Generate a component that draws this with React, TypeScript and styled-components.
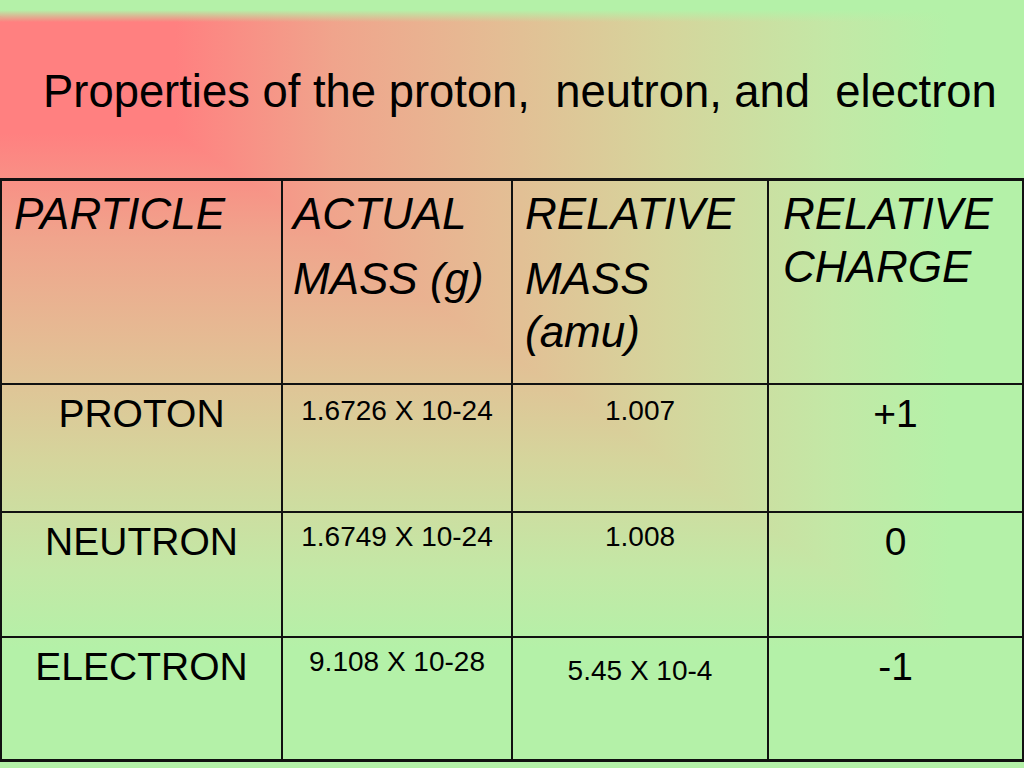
import React from 'react';
import styled, { createGlobalStyle } from 'styled-components';

const GREEN = '#b4f1a8';
const LINE = '#111';

const Global = createGlobalStyle`
  html, body { margin: 0; padding: 0; }
  body {
    width: 1024px;
    height: 768px;
    overflow: hidden;
    background: ${GREEN};
    font-family: "Liberation Sans", Arial, sans-serif;
    color: #000;
  }
`;

const H_STOPS = `#ff8080 175px, #f0a48c 333px, #e4bd94 500px, #d5d59c 667px, #c3e8a6 833px, ${GREEN} 950px`;
const V_STOPS = `#ff8080 123px, #f0a48c 228px, #e4bd94 339px, #d5d59c 450px, #c3e8a6 561px, ${GREEN} 639px`;
const TOP_FADE = `linear-gradient(to bottom, ${GREEN} 0px, rgba(180, 241, 168, 0) 12px)`;

const Page = styled.div`
  width: 1024px;
  height: 768px;
  padding-top: 10px;
  box-sizing: border-box;
  background: ${GREEN};
`;

const Slide = styled.div`
  position: relative;
  isolation: isolate;
  height: 758px;
  display: flex;
  flex-direction: column;
  background: ${TOP_FADE}, linear-gradient(to right, ${H_STOPS});

  &::before {
    content: '';
    position: absolute;
    inset: 0;
    z-index: -1;
    background: ${TOP_FADE}, linear-gradient(to bottom, ${V_STOPS});
    clip-path: polygon(0 6px, 1024px 689px, 1024px 100%, 0 100%);
  }
`;

const Title = styled.h1`
  margin: 0;
  height: 168px;
  box-sizing: border-box;
  padding: 59px 0 0 43px;
  font-size: 45.4px;
  line-height: 45px;
  font-weight: normal;
  white-space: pre;
`;

const Table = styled.div`
  display: grid;
  grid-template-columns: 281px 230px 256px 1fr;
  grid-template-rows: 204px 128px 125px 121px;
  border-top: 3px solid ${LINE};
  border-left: 2px solid ${LINE};
  border-right: 2px solid ${LINE};
  border-bottom: 3px solid ${LINE};
`;

const CellBase = styled.div`
  box-sizing: border-box;
  border-right: 2px solid ${LINE};
  border-bottom: 2px solid ${LINE};
  &:nth-child(4n) { border-right: none; }
  &:nth-last-child(-n + 4) { border-bottom: none; }
`;

const HeadCell = styled(CellBase)<{ $pad: number }>`
  padding: 6px 8px 0 ${p => p.$pad}px;
  font-size: 44px;
  line-height: 53px;
  font-style: italic;
`;

const Para = styled.p`
  margin: 0 0 12px;
`;

const LabelCell = styled(CellBase)`
  padding-top: 5px;
  text-align: center;
  font-size: 39px;
  line-height: 47px;
`;

const NumCell = styled(CellBase)<{ $drop?: number; $nudge?: number }>`
  padding-top: ${p => 7 + (p.$nudge ?? 0) + (p.$drop ?? 0)}px;
  text-align: center;
  font-size: 28px;
  line-height: 34px;
`;

const headers: { pad: number; lines: string[] }[] = [
  { pad: 12, lines: ['PARTICLE'] },
  { pad: 10, lines: ['ACTUAL', 'MASS (g)'] },
  { pad: 12, lines: ['RELATIVE', 'MASS (amu)'] },
  { pad: 14, lines: ['RELATIVE CHARGE'] },
];

const rows: { name: string; mass: string; rel: string; relDrop?: number; nudge?: number; charge: string }[] = [
  { name: 'PROTON', mass: '1.6726 X 10-24', rel: '1.007', nudge: 2, charge: '+1' },
  { name: 'NEUTRON', mass: '1.6749 X 10-24', rel: '1.008', charge: '0' },
  { name: 'ELECTRON', mass: '9.108 X 10-28', rel: '5.45 X 10-4', relDrop: 9, charge: '-1' },
];

export default function App() {
  return (
    <>
      <Global />
      <Page>
        <Slide>
          <Title>Properties of the proton,  neutron, and  electron</Title>
          <Table>
            {headers.map(h => (
              <HeadCell key={h.lines[0] + h.pad} $pad={h.pad}>
                {h.lines.map(l => (
                  <Para key={l}>{l}</Para>
                ))}
              </HeadCell>
            ))}
            {rows.map(r => (
              <React.Fragment key={r.name}>
                <LabelCell>{r.name}</LabelCell>
                <NumCell $nudge={r.nudge}>{r.mass}</NumCell>
                <NumCell $nudge={r.nudge} $drop={r.relDrop}>{r.rel}</NumCell>
                <LabelCell>{r.charge}</LabelCell>
              </React.Fragment>
            ))}
          </Table>
        </Slide>
      </Page>
    </>
  );
}
